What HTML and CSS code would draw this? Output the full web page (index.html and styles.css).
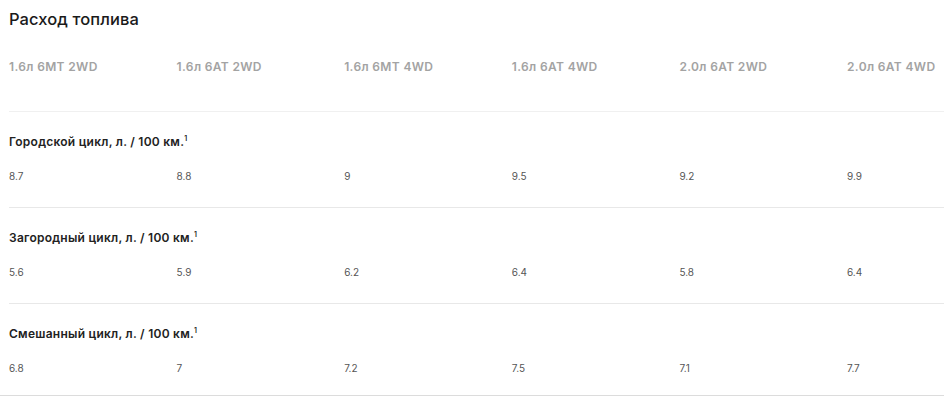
FILE: index.html
```html
<!DOCTYPE html>
<html lang="ru">
<head>
<meta charset="utf-8">
<link rel="stylesheet" href="styles.css">
</head>
<body>
<div class="page">
  <section class="spec">
    <h2 class="title">Расход топлива</h2>
    <div class="row head">
      <div>1.6л 6MT 2WD</div>
      <div>1.6л 6AT 2WD</div>
      <div>1.6л 6MT 4WD</div>
      <div>1.6л 6AT 4WD</div>
      <div>2.0л 6AT 2WD</div>
      <div>2.0л 6AT 4WD</div>
    </div>
    <div class="group">
      <div class="label">Городской цикл, л. / 100 км.<sup>1</sup></div>
      <div class="row vals">
        <div>8.7</div><div>8.8</div><div>9</div><div>9.5</div><div>9.2</div><div>9.9</div>
      </div>
    </div>
    <div class="group">
      <div class="label">Загородный цикл, л. / 100 км.<sup>1</sup></div>
      <div class="row vals">
        <div>5.6</div><div>5.9</div><div>6.2</div><div>6.4</div><div>5.8</div><div>6.4</div>
      </div>
    </div>
    <div class="group last">
      <div class="label">Смешанный цикл, л. / 100 км.<sup>1</sup></div>
      <div class="row vals">
        <div>6.8</div><div>7</div><div>7.2</div><div>7.5</div><div>7.1</div><div>7.7</div>
      </div>
    </div>
  </section>
</div>
</body>
</html>
```
FILE: styles.css
```css
html, body {
  margin: 0;
  padding: 0;
  background: #fff;
  overflow: hidden;
}
.page {
  width: 944px;
  height: 407px;
  overflow: hidden;
  font-family: Inter, "Noto Sans", sans-serif;
}
.spec {
  width: 1014px;
}
.title {
  margin: 0;
  padding: 9px 0 0 9px;
  height: 22px;
  font-size: 16.5px;
  line-height: 20px;
  font-weight: 500;
  color: #1a1a1a;
  letter-spacing: 0.1px;
}
.row {
  display: grid;
  grid-template-columns: repeat(6, 167.6px);
  padding-left: 9px;
}
.head {
  margin-top: 28px;
  height: 52px;
  font-size: 12px;
  line-height: 16px;
  font-weight: 600;
  color: #a3a3a3;
  letter-spacing: 0.35px;
  border-bottom: 1px solid #f0f0f0;
  margin-left: 9px;
  padding-left: 0;
}
.group {
  margin-left: 9px;
  height: 95px;
  border-bottom: 1px solid #e8e8e8;
}
.group.last {
  margin-left: 0;
  padding-left: 9px;
  height: 91px;
  border-bottom-color: #dcdcdc;
}
.label {
  padding-top: 22px;
  height: 16px;
  font-size: 12px;
  line-height: 16px;
  font-weight: 600;
  color: #222;
  letter-spacing: 0.25px;
}
.label sup {
  font-size: 7px;
  line-height: 0;
  vertical-align: 5px;
}
.vals {
  padding-left: 0;
  margin-top: 18px;
  font-size: 10px;
  line-height: 16px;
  color: #555;
}
```
